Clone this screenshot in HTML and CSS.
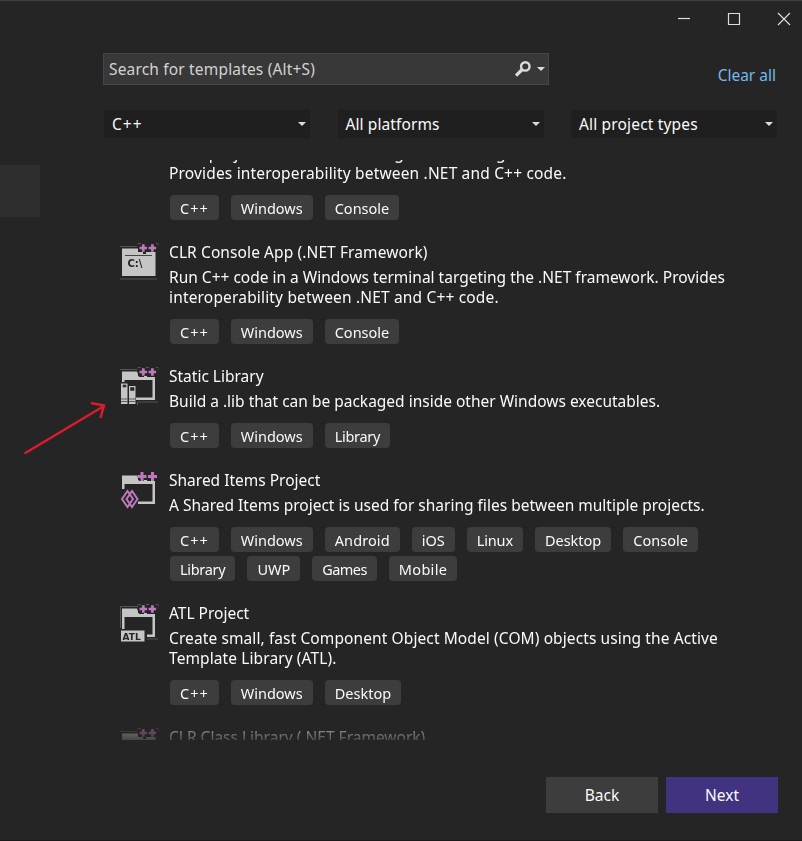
FILE: index.html
```html
<!DOCTYPE html>
<html lang="en">

<head>
    <meta charset="UTF-8">
    <meta name="viewport" content="width=device-width, initial-scale=1.0">
    <title>Create a new project</title>
    <link rel="stylesheet" href="styles.css">
</head>

<body>
    <!-- shared icon parts -->
    <svg class="defs">
        <symbol id="pluses" viewBox="0 0 22 12">
            <path d="M1.500 5h7.500M5.300 1.300v7.500M10.600 5h7.500M14.400 1.300v7.500" stroke="#bf77bd" stroke-width="2.700" />
        </symbol>
        <symbol id="folder" viewBox="0 0 40 40">
            <path d="M3 6.500h15l2 5.500h5v-2h3v2h8v23H3z" fill="#c5c5c5" />
            <path d="M5.500 15h28v17.500h-28z" fill="#252525" />
        </symbol>
        <symbol id="console" viewBox="0 0 40 40">
            <path d="M1 5.500h17M1 38h37M19 4V2.500h3M37 2.500h2V5" stroke="#555" fill="none" />
            <path d="M3 7.500h33.500V35H3z" fill="#c5c5c5" />
            <path d="M6 14.500h27" stroke="#444" />
            <path d="M19 3h20v8H27v2h-3v-2h-5z" fill="#252525" />
            <text x="8.500" y="26" class="icon-text console-text">C:\</text>
            <use href="#pluses" x="19" y="2" width="22" height="12" />
        </symbol>
    </svg>

    <div class="window">
        <div class="titlebar">
            <svg width="14" height="14" viewBox="0 0 14 14"><path d="M1 6.500h12" /></svg>
            <svg width="14" height="14" viewBox="0 0 14 14"><path d="M1.500 1.500h11v11h-11z" /></svg>
            <svg width="14" height="14" viewBox="0 0 14 14"><path d="M1 1l12 12M13 1L1 13" /></svg>
        </div>

        <div class="content">
            <div class="recent">
                <div class="recent-item"></div>
            </div>

            <div class="main">
                <div class="search-row">
                    <div class="search">
                        <span class="search-text wide">Search for templates (Alt+S)</span>
                        <svg width="18" height="18" viewBox="0 0 18 18">
                            <circle cx="11.300" cy="6.400" r="4.200" fill="none" stroke="#dcdcdc" stroke-width="2.400" />
                            <path d="M8.200 9.500L2 15.700" stroke="#dcdcdc" stroke-width="3.200" />
                        </svg>
                        <span class="caret"></span>
                    </div>
                    <a class="clear">Clear all</a>
                </div>

                <div class="filters">
                    <div class="select"><span class="cpp">C++</span><span class="caret"></span></div>
                    <div class="select"><span class="mid">All platforms</span><span class="caret"></span></div>
                    <div class="select"><span class="wide">All project types</span><span class="caret"></span></div>
                </div>

                <div class="list">
                    <div class="item first">
                        <div class="icon"></div>
                        <div class="info">
                            <div class="desc wide">Base project for C++ code using the .NET target.<br>Provides interoperability between .NET and C++ code.</div>
                            <div class="tags"><span class="cpp">C++</span><span>Windows</span><span>Console</span></div>
                        </div>
                    </div>

                    <div class="item">
                        <svg class="icon" viewBox="0 0 40 40"><use href="#console" /></svg>
                        <div class="info">
                            <div class="name mid">CLR Console App (.NET Framework)</div>
                            <div class="desc">Run C++ code in a Windows terminal targeting the .NET framework. Provides<br><span class="wide">interoperability between .NET and C++ code.</span></div>
                            <div class="tags"><span class="cpp">C++</span><span>Windows</span><span>Console</span></div>
                        </div>
                    </div>

                    <div class="item">
                        <svg class="icon" viewBox="0 0 40 40">
                            <path d="M1 4.500h17M19 4V2.500h3M27 2.500h3M37 2.500h2V5M18.500 40v-3H39" stroke="#555" fill="none" />
                            <use href="#folder" />
                            <path d="M1 17h8.500v3H17v20H1z" fill="#252525" />
                            <path d="M2 18.500h6.500V39H2zM10 21h6.500v18H10z" fill="#c5c5c5" />
                            <path d="M4 20h3v2H4zM2 34h6.500M10 34h6.500M2 36.500h6.500M10 36.500h6.500M11.500 22.500h3.500v3h-3.500z" fill="#252525" stroke="#444" stroke-width=".8" />
                            <path d="M19 3h20v8H19z" fill="#252525" />
                            <use href="#pluses" x="19" y="2" width="22" height="12" />
                        </svg>
                        <div class="info">
                            <div class="name">Static Library</div>
                            <div class="desc">Build a .lib that can be packaged inside other Windows executables.</div>
                            <div class="tags"><span class="cpp">C++</span><span>Windows</span><span class="tight">Library</span></div>
                        </div>
                    </div>

                    <div class="item">
                        <svg class="icon" viewBox="0 0 40 40">
                            <use href="#folder" />
                            <path d="M1 20h18v20H1z" fill="#252525" />
                            <path d="M8.500 22L3 30l5.500 8 5.500-8zM13 22l-5.500 8 5.500 8 5.500-8z" fill="none" stroke="#bf77bd" stroke-width="2" />
                            <path d="M19 3h20v8H19z" fill="#252525" />
                            <path d="M18.500 7.500h9M23 3v9M29 7.500h9M33.500 3v9" stroke="#bf77bd" stroke-width="3" />
                        </svg>
                        <div class="info">
                            <div class="name">Shared Items Project</div>
                            <div class="desc">A Shared Items project is used for sharing files between multiple projects.</div>
                            <div class="tags">
                                <span class="cpp">C++</span><span>Windows</span><span class="mid">Android</span><span>iOS</span><span class="mid-tight">Linux</span><span>Desktop</span><span>Console</span>
                                <span class="tight">Library</span><span>UWP</span><span class="tighter">Games</span><span class="loose">Mobile</span>
                            </div>
                        </div>
                    </div>

                    <div class="item">
                        <svg class="icon" viewBox="0 0 40 40">
                            <path d="M1.500 26V4.500H19M19 4V2.500h3M27 2.500h3M37 2.500h2V5M27.500 40v-3H39" stroke="#555" fill="none" />
                            <use href="#folder" />
                            <path d="M1 27h27v13H1z" fill="#252525" />
                            <path d="M2 28.500h23.500v11H2z" fill="#c5c5c5" />
                            <text x="3.500" y="37.500" class="icon-text">ATL</text>
                            <path d="M19 3h20v8H19z" fill="#252525" />
                            <use href="#pluses" x="19" y="2" width="22" height="12" />
                        </svg>
                        <div class="info">
                            <div class="name">ATL Project</div>
                            <div class="desc mid">Create small, fast Component Object Model (COM) objects using the Active<br>Template Library (ATL).</div>
                            <div class="tags"><span class="cpp">C++</span><span>Windows</span><span>Desktop</span></div>
                        </div>
                    </div>

                    <div class="item">
                        <svg class="icon" viewBox="0 0 40 40"><use href="#console" /></svg>
                        <div class="info">
                            <div class="name">CLR Class Library (.NET Framework)</div>
                        </div>
                    </div>
                </div>

                <div class="footer">
                    <button>Back</button>
                    <button class="primary">Next</button>
                </div>
            </div>
        </div>

        <svg class="arrow" width="90" height="60" viewBox="0 0 90 60">
            <path d="M4.500 53.500L84 6M71 3l13 2.500L80.500 18" />
        </svg>
    </div>
</body>

</html>
```
FILE: styles.css
```css
* {
    box-sizing: border-box;
}

body {
    margin: 0;
    background-color: #252525;
    color: #fafafa;
    font-family: "Noto Sans", "Open Sans", sans-serif;
    font-size: 15.5px;
    line-height: 20px;
}

.defs {
    display: none;
}

.window {
    position: relative;
    height: 841px;
    border-top: 1px solid #3f3f3f;
    border-bottom: 1px solid #1b191a;
    overflow: hidden;
}

.titlebar {
    display: flex;
    justify-content: flex-end;
    gap: 36px;
    height: 52px;
    padding: 11px 11px 0 0;
}

.titlebar path {
    fill: none;
    stroke: #dcdcdc;
    stroke-width: 1.2;
}

.content {
    display: flex;
}

.recent {
    width: 103px;
    padding-top: 112px;
}

.recent-item {
    width: 40px;
    height: 52px;
    background-color: #2e2e2e;
}

.main {
    width: 675px;
}

.search-row {
    display: flex;
    justify-content: space-between;
    padding-right: 2px;
}

.search {
    display: flex;
    align-items: center;
    width: 446px;
    height: 32px;
    padding: 0 3px 0 5px;
    border: 1px solid #464646;
    background-color: #383838;
    color: #d2d2d2;
}

.search svg {
    margin-right: 5px;
}

.search-text {
    flex: 1;
}

.clear {
    padding-top: 12px;
    color: #74b8ee;
}

.caret {
    border: 4px solid transparent;
    border-top-color: #dcdcdc;
    border-bottom-width: 0;
}

/* letter spacing */
.wide {
    letter-spacing: 0.17px;
}

.mid {
    letter-spacing: 0.1px;
}

.loose {
    letter-spacing: 0.3px;
}

.mid-tight {
    letter-spacing: -0.15px;
}

.tight {
    letter-spacing: -0.3px;
}

.tighter {
    letter-spacing: -0.55px;
}

.cpp {
    letter-spacing: 1px;
}

.filters {
    display: flex;
    justify-content: space-between;
    padding: 25px 1px 0;
}

.select {
    display: flex;
    align-items: center;
    justify-content: space-between;
    width: 206px;
    height: 28px;
    padding: 0 4px 0 8px;
    background-color: #1f1f1f;
}

.list {
    height: 580px;
    margin-top: 22px;
    padding-left: 16px;
    overflow: hidden;
    -webkit-mask-image: linear-gradient(#000 550px, transparent 588px);
    mask-image: linear-gradient(#000 550px, transparent 588px);
    mask-size: 100% 588px;
}

.item {
    display: flex;
    gap: 10px;
    padding: 6px 0 16px;
}

.item.first {
    margin-top: -23px;
}

.icon {
    flex: none;
    width: 40px;
    height: 40px;
    margin-top: -1px;
}

.icon-text {
    fill: #252525;
    font: bold 9px "DejaVu Sans", sans-serif;
}

.console-text {
    font-size: 10px;
}

.name {
    margin-bottom: 5px;
}

.desc {
    white-space: nowrap;
}

.tags {
    display: flex;
    flex-wrap: wrap;
    gap: 4px 12px;
    width: 560px;
    margin: 12px 0 0 1px;
}

.tags span {
    height: 25px;
    padding: 0 10px;
    border-radius: 4px;
    background-color: #3d3d3d;
    font-size: 14.5px;
    line-height: 26px;
}

.footer {
    display: flex;
    justify-content: flex-end;
    gap: 8px;
    margin-top: 37px;
}

button {
    width: 112px;
    height: 36px;
    border: none;
    background-color: #3d3d3d;
    color: #fafafa;
    font: inherit;
}

button.primary {
    background-color: #413380;
}

/* pointer drawn over the window */
.arrow {
    position: absolute;
    left: 20px;
    top: 399px;
}

.arrow path {
    fill: none;
    stroke: #dc1c2c;
    stroke-width: 2.4;
}
```
